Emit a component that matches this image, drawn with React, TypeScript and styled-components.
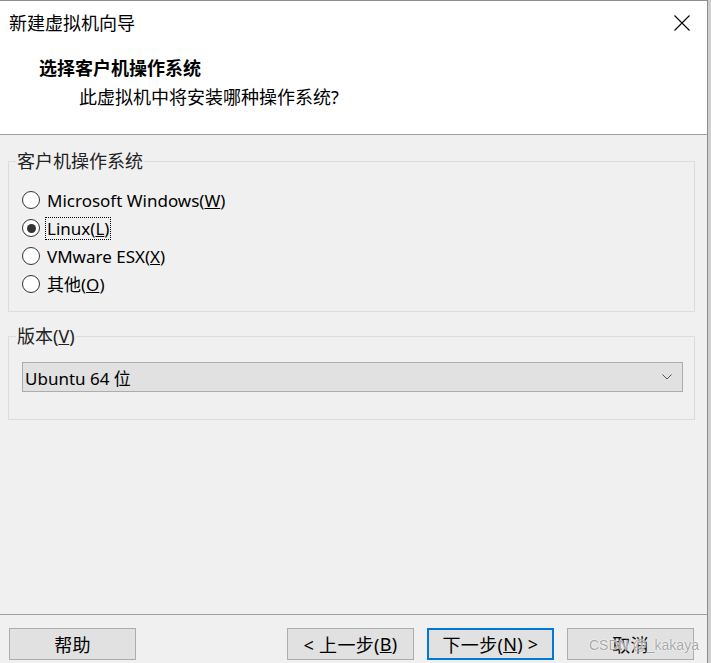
import React from 'react';
import styled, {createGlobalStyle} from 'styled-components';

const GlobalStyle = createGlobalStyle`
  html, body {
    margin: 0;
    padding: 0;
  }
  body {
    background: #cfcfcf;
    font-family: "Noto Sans", "Noto Sans CJK SC", sans-serif;
    color: #000;
  }
`;

const Window = styled.div`
  position: relative;
  box-sizing: border-box;
  width: 708px;
  height: 663px;
  display: flex;
  flex-direction: column;
  border-top: 1px solid #8c8c8c;
  border-right: 1px solid #8c8c8c;
  background: #f0f0f0;
  overflow: hidden;
`;

const Header = styled.header`
  height: 133px;
  background: #fff;
  border-bottom: 1px solid #a0a0a0;
  display: flex;
  flex-direction: column;
`;

const TitleBar = styled.div`
  height: 44px;
  display: flex;
  align-items: center;
  justify-content: space-between;
  padding: 0 15px 0 9px;
`;

const Title = styled.span`
  font-size: 18px;
  line-height: 22px;
`;

const CloseButton = styled.button`
  width: 20px;
  height: 20px;
  padding: 0;
  border: none;
  background: none;
  display: flex;
  align-items: center;
  justify-content: center;
`;

const Heading = styled.h1`
  margin: 11px 0 0 39px;
  font-size: 18px;
  line-height: 24px;
  font-weight: 700;
`;

const SubHeading = styled.p`
  margin: 5px 0 0 79px;
  font-size: 18px;
  line-height: 24px;
`;

const Body = styled.main`
  flex: 1;
  padding: 15px 12px 0 8px;
  display: flex;
  flex-direction: column;
  gap: 13px;
`;

const GroupBox = styled.fieldset<{$pad: string}>`
  margin: 0;
  padding: ${p => p.$pad};
  border: 1px solid #dcdcdc;
  min-width: 0;
`;

const Legend = styled.legend`
  margin-left: -6px;
  padding: 0 1px;
  font-size: 18px;
  line-height: 22px;
  color: #222;
`;

const RadioList = styled.div`
  display: flex;
  flex-direction: column;
`;

const RadioRow = styled.label`
  height: 28px;
  display: flex;
  align-items: center;
  gap: 6px;
  font-size: 17px;
`;

const RadioCircle = styled.span<{$checked?: boolean}>`
  width: 18px;
  height: 18px;
  box-sizing: border-box;
  border-radius: 50%;
  border: 1px solid #333;
  background: #fff;
  display: flex;
  align-items: center;
  justify-content: center;

  &::after {
    content: '';
    display: ${p => (p.$checked ? 'block' : 'none')};
    width: 9px;
    height: 9px;
    border-radius: 50%;
    background: #333;
  }
`;

const RadioText = styled.span<{$focused?: boolean}>`
  line-height: 21px;
  padding: 0 1px;
  outline: ${p => (p.$focused ? '1px dotted #000' : 'none')};
`;

const Select = styled.div`
  flex: none;
  height: 30px;
  box-sizing: border-box;
  border: 1px solid #adadad;
  background: #e1e1e1;
  display: flex;
  align-items: center;
  justify-content: space-between;
  padding: 0 10px 0 2px;
  font-size: 17px;
`;

const Footer = styled.footer`
  box-sizing: border-box;
  height: 49px;
  border-top: 1px solid #a0a0a0;
  display: flex;
  align-items: flex-start;
  gap: 13px;
  padding: 13px 13px 0 9px;
`;

const Button = styled.button<{$default?: boolean; $push?: boolean}>`
  flex: none;
  width: 127px;
  height: 32px;
  box-sizing: border-box;
  margin-left: ${p => (p.$push ? 'auto' : '0')};
  background: #e1e1e1;
  border: ${p => (p.$default ? '2px solid #0078d7' : '1px solid #adadad')};
  font-family: "Noto Sans", "Noto Sans CJK SC", sans-serif;
  font-size: 18px;
  letter-spacing: 0.3px;
  color: #000;
  padding: 0;
  display: flex;
  align-items: center;
  justify-content: center;
`;

const Watermark = styled.span`
  position: absolute;
  left: 589px;
  top: 636px;
  font-family: "Liberation Sans", Arial, sans-serif;
  font-size: 14px;
  color: rgba(150, 150, 150, 0.85);
  text-shadow: 0 0 2px #fff, 0 0 1px #fff;
  pointer-events: none;
`;

const CloseIcon = () => (
    <svg width="16" height="16" viewBox="0 0 16 16">
        <path d="M0.5 0.5 L15.5 15.5 M15.5 0.5 L0.5 15.5" stroke="#000" strokeWidth="1.1" fill="none"/>
    </svg>
);

const ChevronIcon = () => (
    <svg width="10" height="6" viewBox="0 0 10 6">
        <path d="M0.5 0.5 L5 5 L9.5 0.5" stroke="#555" strokeWidth="1" fill="none"/>
    </svg>
);

const options = [
    {label: 'Microsoft Windows(', key: 'W', checked: false},
    {label: 'Linux(', key: 'L', checked: true},
    {label: 'VMware ESX(', key: 'X', checked: false},
    {label: '其他(', key: 'O', checked: false},
];

export default function App() {
    return (
        <>
            <GlobalStyle/>
            <Window>
                <Header>
                    <TitleBar>
                        <Title>新建虚拟机向导</Title>
                        <CloseButton aria-label="关闭"><CloseIcon/></CloseButton>
                    </TitleBar>
                    <Heading>选择客户机操作系统</Heading>
                    <SubHeading>此虚拟机中将安装哪种操作系统?</SubHeading>
                </Header>
                <Body>
                    <GroupBox $pad="14px 12px 13px 13px">
                        <Legend>客户机操作系统</Legend>
                        <RadioList>
                            {options.map(o => (
                                <RadioRow key={o.key}>
                                    <RadioCircle $checked={o.checked}/>
                                    <RadioText $focused={o.checked}>
                                        {o.label}<u>{o.key}</u>)
                                    </RadioText>
                                </RadioRow>
                            ))}
                        </RadioList>
                    </GroupBox>
                    <GroupBox $pad="15px 11px 27px 13px">
                        <Legend>版本(<u>V</u>)</Legend>
                        <Select>
                            <span>Ubuntu 64 位</span>
                            <ChevronIcon/>
                        </Select>
                    </GroupBox>
                </Body>
                <Footer>
                    <Button>帮助</Button>
                    <Button $push>&lt; 上一步(<u>B</u>)</Button>
                    <Button $default>下一步(<u>N</u>) &gt;</Button>
                    <Button>取消</Button>
                </Footer>
                <Watermark>CSDN @_kakaya</Watermark>
            </Window>
        </>
    );
}
